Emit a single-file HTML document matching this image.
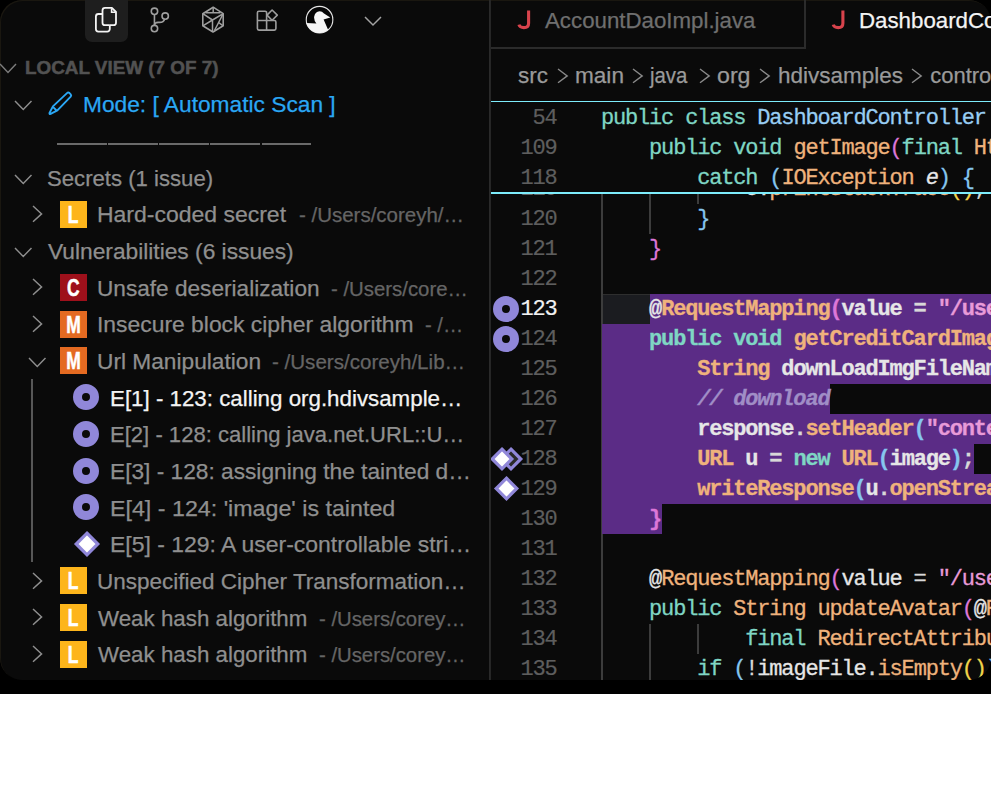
<!DOCTYPE html>
<html><head><meta charset="utf-8">
<style>
*{margin:0;padding:0;box-sizing:border-box}
html,body{width:991px;height:792px;background:#fff;overflow:hidden}
body{position:relative;font-family:"Liberation Sans",sans-serif}
#outer{position:absolute;left:0;top:0;width:991px;height:694px;background:#000}
#panel{position:absolute;left:0;top:0;width:991px;height:680px;background:#0a0a0a;border-radius:22px;overflow:hidden;box-shadow:inset 1px 1px 0 #1a1710}
.abs{position:absolute}
#actsel{position:absolute;left:85px;top:-8px;width:43.3px;height:50px;border-radius:7px;background:#1e1e1e}
.row{position:absolute;width:370px;height:36.667px;line-height:36.667px;font-size:21.67px;color:#9d9d9d;white-space:nowrap;overflow:hidden;text-overflow:ellipsis}
.desc{color:#6f6f6f;font-size:19.5px;margin-left:10px}
.badge{position:absolute;width:27px;height:27px;color:#fff;font-weight:bold;font-size:21px;line-height:27px;text-align:center}
#divider{position:absolute;left:489px;top:0;width:1.5px;height:680px;background:#2a2a2a}
.mono{font-family:"Liberation Mono",monospace;font-size:22px;letter-spacing:-1.18px}
.ln{position:absolute;width:66px;text-align:right;color:#6e6e6e;height:30px;line-height:30px;-webkit-text-stroke-width:0.2px}
.cl{position:absolute;height:30px;line-height:30px;white-space:pre;color:#d8d8d8;-webkit-text-stroke-width:0.3px}
.bsep{display:inline-block;width:30px}
.k{color:#7fd6c4}.f{color:#efb27c}.p{color:#dd77d8}.b{color:#86c6ef}.s{color:#e89ad8}.c{color:#a08ec6;font-style:italic}.w{color:#e6e6e6}.cls{color:#98cdf3}.y{color:#f1d44a}
.t{position:absolute;white-space:pre;transform-origin:0 50%;-webkit-text-stroke:0.25px currentColor}
.i{font-style:italic}
.badge span{display:inline-block;font-size:23px;line-height:27px;transform:scaleX(0.76) translateY(0.7px);font-weight:bold;-webkit-text-stroke:0.5px #fff}

</style></head>
<body>
<div id="outer"></div>
<div id="panel">
<div id="actsel"></div>
<svg class="abs" style="left:88px;top:2px" width="40" height="36" viewBox="0 0 40 36">
<path d="M14.5 11 V8.4 a2.5 2.5 0 0 1 2.5 -2.5 H23.9 L28 10 V20.7 a2.5 2.5 0 0 1 -2.5 2.5 H21.8" fill="none" stroke="#f4f4f4" stroke-width="1.8" stroke-linejoin="round"/>
<path d="M23.6 6.4 V10.3 H27.6" fill="none" stroke="#f4f4f4" stroke-width="1.6"/>
<path d="M14.5 11 V20.7 a2.5 2.5 0 0 0 2.5 2.5 H21.8" fill="none" stroke="#f4f4f4" stroke-width="1.8"/>
<path d="M14.5 12 H10.4 a2.5 2.5 0 0 0 -2.5 2.5 V27.1 a2.5 2.5 0 0 0 2.5 2.5 H19.3 a2.5 2.5 0 0 0 2.5 -2.5 V23.2" fill="none" stroke="#f4f4f4" stroke-width="1.8"/>
</svg>
<svg class="abs" style="left:140px;top:2px" width="40" height="36" viewBox="0 0 40 36">
<circle cx="14.45" cy="9.3" r="3.2" fill="none" stroke="#9e9e9e" stroke-width="1.6"/>
<circle cx="14.45" cy="26.6" r="3.2" fill="none" stroke="#9e9e9e" stroke-width="1.6"/>
<circle cx="25.2" cy="14.1" r="3.2" fill="none" stroke="#9e9e9e" stroke-width="1.6"/>
<path d="M14.45 12.5 V23.4" fill="none" stroke="#9e9e9e" stroke-width="1.6"/>
<path d="M24.6 17.2 Q23.8 20.3 19.5 20.4 H18 Q14.6 20.6 14.45 23" fill="none" stroke="#9e9e9e" stroke-width="1.6"/>
</svg>
<svg class="abs" style="left:195px;top:2px" width="40" height="36" viewBox="0 0 40 36">
<path d="M18.2 5.2 L28.2 11.7 V23.8 L18 30 L7.8 23.8 V11.7 Z" fill="none" stroke="#9e9e9e" stroke-width="1.6" stroke-linejoin="round"/>
<path d="M18.2 5.2 V10.7 M10.5 10.7 H25.5 M7.8 11.7 L17.5 18 L28.2 11.7 M17.5 18 V30 M7.8 23.8 L17.5 18 M28.2 11.7 L19.5 28.5 M24.1 20.9 L28.2 23.8" fill="none" stroke="#9e9e9e" stroke-width="1.5" stroke-linejoin="round"/>
</svg>
<svg class="abs" style="left:250px;top:2px" width="40" height="36" viewBox="0 0 40 36">
<path d="M8.9 9.2 H15.1 a1.5 1.5 0 0 1 1.5 1.5 V18.5 H24.4 a1.5 1.5 0 0 1 1.5 1.5 V26.6 a1.5 1.5 0 0 1 -1.5 1.5 H8.9 a1.5 1.5 0 0 1 -1.5 -1.5 V10.7 a1.5 1.5 0 0 1 1.5 -1.5 Z M7.4 18.5 H16.6 V28.1" fill="none" stroke="#9e9e9e" stroke-width="1.6" stroke-linejoin="round"/>
<path d="M22.1 8 L27.3 13.1 L22.1 18.2 L17 13.1 Z" fill="none" stroke="#9e9e9e" stroke-width="1.6" stroke-linejoin="round"/>
</svg>
<svg class="abs" style="left:300px;top:2px" width="40" height="36" viewBox="0 0 40 36">
<circle cx="19.55" cy="17.65" r="13.3" fill="#050505" stroke="#e6e6e6" stroke-width="1.1"/>
<path d="M6.3 20.9 L16.4 21.4 Q13.6 18 14.2 14.6 Q15.2 9.4 19.6 9.2 Q22.2 9.2 24 11.6 L30.3 15.6 L23.6 17.6 L28.2 27.9 A13.6 13.6 0 0 1 6.3 20.9 Z" fill="#f6f6f6"/>
</svg>
<svg class="abs" style="left:363.0px;top:14.5px" width="20.0" height="12.0"><polyline points="2,2 10.00,10.00 18.00,2" fill="none" stroke="#a3a3a3" stroke-width="1.45"/></svg>
<svg class="abs" style="left:-2.0px;top:62.1px" width="20.0" height="12.4"><polyline points="2,2 10.00,10.40 18.00,2" fill="none" stroke="#7c7c7c" stroke-width="1.45"/></svg>
<div id="hdr" class="t" style="left:24.85px;top:50.10px;height:36.67px;line-height:36.67px;font-size:18.3px;color:#525252;font-weight:bold;transform:scaleX(1.0312);-webkit-text-stroke:0.5px #525252">LOCAL VIEW (7 OF 7)</div>
<svg class="abs" style="left:13.0px;top:99.2px" width="20.5" height="12.4"><polyline points="2,2 10.25,10.40 18.50,2" fill="none" stroke="#8e8e8e" stroke-width="1.45"/></svg>
<svg class="abs" style="left:40px;top:88px" width="40" height="34" viewBox="0 0 40 34">
<path d="M12.9 18.4 L27 5.1 Q28.2 4 29.5 5.1 L30.7 6.3 Q31.7 7.5 30.7 8.7 L17.4 22.3 L10.6 25.9 Q9.2 26.4 9.5 25 Z M13.4 19.3 L16.6 22.5" fill="none" stroke="#2aa7f4" stroke-width="1.9" stroke-linejoin="round"/>
</svg>
<div id="mode" class="t" style="left:82.97px;top:87.30px;height:36.67px;line-height:36.67px;font-size:22.0px;color:#2aa7f4;font-weight:normal;transform:scaleX(1.0331);">Mode: [ Automatic Scan ]</div>
<div class="abs" style="left:56.8px;top:142.6px;width:49.8px;height:2px;background:#6a6a6a"></div>
<div class="abs" style="left:108.0px;top:142.6px;width:49.8px;height:2px;background:#6a6a6a"></div>
<div class="abs" style="left:159.2px;top:142.6px;width:49.8px;height:2px;background:#6a6a6a"></div>
<div class="abs" style="left:210.4px;top:142.6px;width:49.8px;height:2px;background:#6a6a6a"></div>
<div class="abs" style="left:261.6px;top:142.6px;width:49.8px;height:2px;background:#6a6a6a"></div>
<svg class="abs" style="left:13.0px;top:172.6px" width="20.5" height="12.4"><polyline points="2,2 10.25,10.40 18.50,2" fill="none" stroke="#8e8e8e" stroke-width="1.45"/></svg>
<div id="sec" class="t" style="left:46.70px;top:160.63px;height:36.67px;line-height:36.67px;font-size:22.0px;color:#8f8f8f;font-weight:normal;transform:scaleX(1.0062);">Secrets (1 issue)</div>
<svg class="abs" style="left:31.0px;top:203.9px" width="12.6" height="19.8"><polyline points="2,2 10.60,9.90 2,17.80" fill="none" stroke="#8e8e8e" stroke-width="1.45"/></svg>
<div class="badge" style="left:59.8px;top:200.80px;background:#fdb51b"><span>L</span></div>
<div id="hc" class="t" style="left:96.64px;top:197.30px;height:36.67px;line-height:36.67px;font-size:22.0px;color:#8f8f8f;font-weight:normal;transform:scaleX(1.0445);">Hard-coded secret</div>
<div id="hcd" class="t" style="left:299.00px;top:197.30px;height:36.67px;line-height:36.67px;font-size:19.6px;color:#656565;font-weight:normal;transform:scaleX(1.0449);">- /Users/coreyh/…</div>
<svg class="abs" style="left:13.0px;top:245.9px" width="20.5" height="12.4"><polyline points="2,2 10.25,10.40 18.50,2" fill="none" stroke="#8e8e8e" stroke-width="1.45"/></svg>
<div id="vul" class="t" style="left:47.72px;top:233.97px;height:36.67px;line-height:36.67px;font-size:22.0px;color:#8f8f8f;font-weight:normal;transform:scaleX(1.0337);">Vulnerabilities (6 issues)</div>
<svg class="abs" style="left:31.0px;top:277.3px" width="12.6" height="19.8"><polyline points="2,2 10.60,9.90 2,17.80" fill="none" stroke="#8e8e8e" stroke-width="1.45"/></svg>
<div class="badge" style="left:59.8px;top:274.14px;background:#9e101b"><span>C</span></div>
<div id="us" class="t" style="left:96.66px;top:270.64px;height:36.67px;line-height:36.67px;font-size:22.0px;color:#8f8f8f;font-weight:normal;transform:scaleX(1.0281);">Unsafe deserialization</div>
<div id="usd" class="t" style="left:330.79px;top:270.64px;height:36.67px;line-height:36.67px;font-size:19.6px;color:#656565;font-weight:normal;transform:scaleX(1.0388);">- /Users/core…</div>
<svg class="abs" style="left:31.0px;top:313.9px" width="12.6" height="19.8"><polyline points="2,2 10.60,9.90 2,17.80" fill="none" stroke="#8e8e8e" stroke-width="1.45"/></svg>
<div class="badge" style="left:59.8px;top:310.80px;background:#e46a21"><span>M</span></div>
<div id="ib" class="t" style="left:96.64px;top:307.30px;height:36.67px;line-height:36.67px;font-size:22.0px;color:#8f8f8f;font-weight:normal;transform:scaleX(1.0398);">Insecure block cipher algorithm</div>
<div id="ibd" class="t" style="left:425.49px;top:307.30px;height:36.67px;line-height:36.67px;font-size:19.6px;color:#656565;font-weight:normal;transform:scaleX(1.0311);">- /…</div>
<svg class="abs" style="left:26.8px;top:355.9px" width="20.5" height="12.4"><polyline points="2,2 10.25,10.40 18.50,2" fill="none" stroke="#8e8e8e" stroke-width="1.45"/></svg>
<div class="badge" style="left:59.8px;top:347.47px;background:#e46a21"><span>M</span></div>
<div id="um" class="t" style="left:96.66px;top:343.97px;height:36.67px;line-height:36.67px;font-size:22.0px;color:#8f8f8f;font-weight:normal;transform:scaleX(1.0319);">Url Manipulation</div>
<div id="umd" class="t" style="left:272.10px;top:343.97px;height:36.67px;line-height:36.67px;font-size:19.6px;color:#656565;font-weight:normal;transform:scaleX(1.0495);">- /Users/coreyh/Lib…</div>
<div class="abs" style="left:31.4px;top:379px;width:1.4px;height:182.5px;background:#575757"></div>
<svg class="abs" style="left:72.4px;top:383.2px" width="28" height="28"><circle cx="14" cy="14" r="8.5" fill="none" stroke="#9087d9" stroke-width="9"/></svg>
<div id="e1" class="t" style="left:109.68px;top:380.64px;height:36.67px;line-height:36.67px;font-size:22.0px;color:#f4f4f4;font-weight:normal;transform:scaleX(1.0145);">E[1] - 123: calling org.hdivsample…</div>
<svg class="abs" style="left:72.4px;top:419.8px" width="28" height="28"><circle cx="14" cy="14" r="8.5" fill="none" stroke="#9087d9" stroke-width="9"/></svg>
<div id="e2" class="t" style="left:109.69px;top:417.30px;height:36.67px;line-height:36.67px;font-size:22.0px;color:#8f8f8f;font-weight:normal;transform:scaleX(1.0029);">E[2] - 128: calling java.net.URL::U…</div>
<svg class="abs" style="left:72.4px;top:456.5px" width="28" height="28"><circle cx="14" cy="14" r="8.5" fill="none" stroke="#9087d9" stroke-width="9"/></svg>
<div id="e3" class="t" style="left:109.66px;top:453.97px;height:36.67px;line-height:36.67px;font-size:22.0px;color:#8f8f8f;font-weight:normal;transform:scaleX(1.0318);">E[3] - 128: assigning the tainted d…</div>
<svg class="abs" style="left:72.4px;top:493.2px" width="28" height="28"><circle cx="14" cy="14" r="8.5" fill="none" stroke="#9087d9" stroke-width="9"/></svg>
<div id="e4" class="t" style="left:109.63px;top:490.64px;height:36.67px;line-height:36.67px;font-size:22.0px;color:#8f8f8f;font-weight:normal;transform:scaleX(1.0560);">E[4] - 124: 'image' is tainted</div>
<svg class="abs" style="left:72.5px;top:529.8px" width="28" height="28"><path d="M14.0 3.2 L24.8 14.0 L14.0 24.8 L3.2 14.0 Z" fill="#fff" stroke="#9087d9" stroke-width="3.2" stroke-linejoin="miter"/></svg>
<div id="e5" class="t" style="left:109.64px;top:527.30px;height:36.67px;line-height:36.67px;font-size:22.0px;color:#8f8f8f;font-weight:normal;transform:scaleX(1.0439);">E[5] - 129: A user-controllable stri…</div>
<svg class="abs" style="left:31.0px;top:570.6px" width="12.6" height="19.8"><polyline points="2,2 10.60,9.90 2,17.80" fill="none" stroke="#8e8e8e" stroke-width="1.45"/></svg>
<div class="badge" style="left:59.8px;top:567.47px;background:#fdb51b"><span>L</span></div>
<div id="uc" class="t" style="left:96.67px;top:563.97px;height:36.67px;line-height:36.67px;font-size:22.0px;color:#8f8f8f;font-weight:normal;transform:scaleX(1.0224);">Unspecified Cipher Transformation…</div>
<svg class="abs" style="left:31.0px;top:607.3px" width="12.6" height="19.8"><polyline points="2,2 10.60,9.90 2,17.80" fill="none" stroke="#8e8e8e" stroke-width="1.45"/></svg>
<div class="badge" style="left:59.8px;top:604.14px;background:#fdb51b"><span>L</span></div>
<div id="wh1" class="t" style="left:97.61px;top:600.64px;height:36.67px;line-height:36.67px;font-size:22.0px;color:#8f8f8f;font-weight:normal;transform:scaleX(1.0151);">Weak hash algorithm</div>
<div id="wh1d" class="t" style="left:319.27px;top:600.64px;height:36.67px;line-height:36.67px;font-size:19.6px;color:#656565;font-weight:normal;transform:scaleX(1.0360);">- /Users/corey…</div>
<svg class="abs" style="left:31.0px;top:643.9px" width="12.6" height="19.8"><polyline points="2,2 10.60,9.90 2,17.80" fill="none" stroke="#8e8e8e" stroke-width="1.45"/></svg>
<div class="badge" style="left:59.8px;top:640.80px;background:#fdb51b"><span>L</span></div>
<div id="wh2" class="t" style="left:97.61px;top:637.30px;height:36.67px;line-height:36.67px;font-size:22.0px;color:#8f8f8f;font-weight:normal;transform:scaleX(1.0151);">Weak hash algorithm</div>
<div id="wh2d" class="t" style="left:319.27px;top:637.30px;height:36.67px;line-height:36.67px;font-size:19.6px;color:#656565;font-weight:normal;transform:scaleX(1.0360);">- /Users/corey…</div>
<div id="divider"></div>
<div class="abs" style="left:491px;top:47px;width:314px;height:1.5px;background:#2b2b2b"></div>
<div class="abs" style="left:804px;top:0;width:1.5px;height:48.5px;background:#2b2b2b"></div>
<svg class="abs" style="left:510px;top:8px" width="30" height="26"><path d="M18.6 2.4 V15.2 Q18.6 19.6 13.9 19.6 Q9.8 19.6 8.9 16.6" fill="none" stroke="#d8434c" stroke-width="3.1"/></svg>
<div id="tab1" class="t" style="left:544.50px;top:0.00px;height:42.00px;line-height:42.00px;font-size:22.0px;color:#6f6f6f;font-weight:normal;transform:scaleX(1.0125);">AccountDaoImpl.java</div>
<svg class="abs" style="left:824px;top:8px" width="30" height="26"><path d="M18.9 2.4 V15.2 Q18.9 19.6 14.2 19.6 Q10.1 19.6 9.2 16.6" fill="none" stroke="#d8434c" stroke-width="3.1"/></svg>
<div id="bc1" class="t" style="left:517.79px;top:58.00px;height:36.00px;line-height:36.00px;font-size:22.0px;color:#9a9a9a;font-weight:normal;transform:scaleX(1.0215);">src</div>
<div id="bc2" class="t" style="left:574.78px;top:58.00px;height:36.00px;line-height:36.00px;font-size:22.0px;color:#9a9a9a;font-weight:normal;transform:scaleX(1.0263);">main</div>
<div id="bc3" class="t" style="left:650.25px;top:58.00px;height:36.00px;line-height:36.00px;font-size:22.0px;color:#9a9a9a;font-weight:normal;transform:scaleX(0.9258);">java</div>
<div id="bc4" class="t" style="left:717.00px;top:58.00px;height:36.00px;line-height:36.00px;font-size:22.0px;color:#9a9a9a;font-weight:normal;transform:scaleX(1.0523);">org</div>
<div id="bc5" class="t" style="left:777.69px;top:58.00px;height:36.00px;line-height:36.00px;font-size:22.0px;color:#9a9a9a;font-weight:normal;transform:scaleX(1.0215);">hdivsamples</div>
<div id="bc6" class="t" style="left:930.20px;top:58.00px;height:36.00px;line-height:36.00px;font-size:22.0px;color:#9a9a9a;font-weight:normal;transform:scaleX(1.0000);">controllers</div>
<svg class="abs" style="left:556.2px;top:67.3px" width="13.2" height="17.8"><polyline points="2,2 11.20,8.90 2,15.80" fill="none" stroke="#8a8a8a" stroke-width="1.4"/></svg>
<svg class="abs" style="left:630.9px;top:67.3px" width="13.2" height="17.8"><polyline points="2,2 11.20,8.90 2,15.80" fill="none" stroke="#8a8a8a" stroke-width="1.4"/></svg>
<svg class="abs" style="left:697.5px;top:67.3px" width="13.2" height="17.8"><polyline points="2,2 11.20,8.90 2,15.80" fill="none" stroke="#8a8a8a" stroke-width="1.4"/></svg>
<svg class="abs" style="left:757.7px;top:67.3px" width="13.2" height="17.8"><polyline points="2,2 11.20,8.90 2,15.80" fill="none" stroke="#8a8a8a" stroke-width="1.4"/></svg>
<svg class="abs" style="left:910.4px;top:67.3px" width="13.2" height="17.8"><polyline points="2,2 11.20,8.90 2,15.80" fill="none" stroke="#8a8a8a" stroke-width="1.4"/></svg>
<div class="abs" style="left:491px;top:100.7px;width:600px;height:1.6px;background:#7decfb"></div>
<div class="abs" style="left:601.00px;top:192.00px;width:1.5px;height:488.00px;background:#3c3c3c"></div>
<div class="abs" style="left:649.08px;top:192.00px;width:1.5px;height:41.70px;background:#3c3c3c"></div>
<div class="abs" style="left:697.16px;top:192.00px;width:1.5px;height:11.70px;background:#3c3c3c"></div>
<div class="abs" style="left:649.08px;top:623.70px;width:1.5px;height:56.30px;background:#3c3c3c"></div>
<div class="abs" style="left:697.16px;top:623.70px;width:1.5px;height:30.00px;background:#3c3c3c"></div>
<div class="abs" style="left:602.50px;top:293.70px;width:47.08px;height:30px;background:#1b1c20;border-top:1px solid #2e2e2e"></div>
<div class="abs" style="left:649.58px;top:293.70px;width:450.42px;height:30px;background:#5b2c86"></div>
<div class="abs" style="left:601.50px;top:323.70px;width:498.50px;height:30px;background:#5b2c86"></div>
<div class="abs" style="left:601.50px;top:353.70px;width:498.50px;height:30px;background:#5b2c86"></div>
<div class="abs" style="left:601.50px;top:413.70px;width:498.50px;height:30px;background:#5b2c86"></div>
<div class="abs" style="left:601.50px;top:473.70px;width:498.50px;height:30px;background:#5b2c86"></div>
<div class="abs" style="left:601.50px;top:383.70px;width:228.38px;height:30px;background:#5b2c86"></div>
<div class="abs" style="left:601.50px;top:443.70px;width:372.62px;height:30px;background:#5b2c86"></div>
<div class="abs" style="left:601.50px;top:503.70px;width:60.10px;height:30px;background:#5b2c86"></div>
<div class="ln mono" style="left:480px;top:175.30px;width:76.6px;color:#5e5e5e">119</div>
<div class="cl mono" style="left:601.00px;top:174.70px">            <span class="w">e</span>.<span class="f">printStackTrace</span><span class="y">()</span>;</div>
<div class="ln mono" style="left:480px;top:205.30px;width:76.6px;color:#5e5e5e">120</div>
<div class="cl mono" style="left:601.00px;top:204.70px">        <span class="b">}</span></div>
<div class="ln mono" style="left:480px;top:235.30px;width:76.6px;color:#5e5e5e">121</div>
<div class="cl mono" style="left:601.00px;top:234.70px">    <span class="p">}</span></div>
<div class="ln mono" style="left:480px;top:265.30px;width:76.6px;color:#5e5e5e">122</div>
<div class="cl mono" style="left:601.00px;top:264.70px"></div>
<div class="ln mono" style="left:480px;top:295.30px;width:76.6px;color:#f2f2f2">123</div>
<div class="cl mono" style="left:601.00px;top:294.70px;font-weight:bold">    <span class="w">@</span><span class="f">RequestMapping</span><span class="p">(</span><span class="w">value</span> = <span class="s">"/user/creditcardimage"</span></div>
<div class="ln mono" style="left:480px;top:325.30px;width:76.6px;color:#5e5e5e">124</div>
<div class="cl mono" style="left:601.00px;top:324.70px;font-weight:bold">    <span class="k">public</span> <span class="k">void</span> <span class="f">getCreditCardImage</span><span class="p">(</span></div>
<div class="ln mono" style="left:480px;top:355.30px;width:76.6px;color:#5e5e5e">125</div>
<div class="cl mono" style="left:601.00px;top:354.70px;font-weight:bold">        <span class="f">String</span> <span class="w">downLoadImgFileName</span> = </div>
<div class="ln mono" style="left:480px;top:385.30px;width:76.6px;color:#5e5e5e">126</div>
<div class="cl mono" style="left:601.00px;top:384.70px;font-weight:bold">        <span class="c">// download</span></div>
<div class="ln mono" style="left:480px;top:415.30px;width:76.6px;color:#5e5e5e">127</div>
<div class="cl mono" style="left:601.00px;top:414.70px;font-weight:bold">        <span class="w">response</span>.<span class="f">setHeader</span><span class="b">(</span><span class="s">"content-disposition"</span></div>
<div class="ln mono" style="left:480px;top:445.30px;width:76.6px;color:#5e5e5e">128</div>
<div class="cl mono" style="left:601.00px;top:444.70px;font-weight:bold">        <span class="f">URL</span> <span class="w">u</span> = <span class="k">new</span> <span class="f">URL</span><span class="b">(</span><span class="w">image</span><span class="b">)</span>;</div>
<div class="ln mono" style="left:480px;top:475.30px;width:76.6px;color:#5e5e5e">129</div>
<div class="cl mono" style="left:601.00px;top:474.70px;font-weight:bold">        <span class="f">writeResponse</span><span class="b">(</span><span class="w">u</span>.<span class="f">openStream</span><span class="y">()</span></div>
<div class="ln mono" style="left:480px;top:505.30px;width:76.6px;color:#5e5e5e">130</div>
<div class="cl mono" style="left:601.00px;top:504.70px;font-weight:bold">    <span class="p">}</span></div>
<div class="ln mono" style="left:480px;top:535.30px;width:76.6px;color:#5e5e5e">131</div>
<div class="cl mono" style="left:601.00px;top:534.70px"></div>
<div class="ln mono" style="left:480px;top:565.30px;width:76.6px;color:#5e5e5e">132</div>
<div class="cl mono" style="left:601.00px;top:564.70px">    <span class="w">@</span><span class="f">RequestMapping</span><span class="p">(</span><span class="w">value</span> = <span class="s">"/user/avatar"</span></div>
<div class="ln mono" style="left:480px;top:595.30px;width:76.6px;color:#5e5e5e">133</div>
<div class="cl mono" style="left:601.00px;top:594.70px">    <span class="k">public</span> <span class="f">String</span> <span class="f">updateAvatar</span><span class="p">(</span><span class="w">@</span><span class="f">RequestParam</span></div>
<div class="ln mono" style="left:480px;top:625.30px;width:76.6px;color:#5e5e5e">134</div>
<div class="cl mono" style="left:601.00px;top:624.70px">            <span class="k">final</span> <span class="f">RedirectAttributes</span></div>
<div class="ln mono" style="left:480px;top:655.30px;width:76.6px;color:#5e5e5e">135</div>
<div class="cl mono" style="left:601.00px;top:654.70px">        <span class="k">if</span> <span class="b">(</span>!<span class="w">imageFile</span>.<span class="f">isEmpty</span><span class="y">()</span><span class="b">)</span> {</div>
<div class="abs" style="left:491px;top:102.5px;width:600px;height:90px;background:#0a0a0a"></div>
<div class="ln mono" style="left:480px;top:104.10px;width:76.6px;color:#5e5e5e">54</div>
<div class="cl mono" style="left:601.00px;top:103.50px"><span class="k">public</span> <span class="k">class</span> <span class="cls">DashboardController</span> {</div>
<div class="ln mono" style="left:480px;top:134.10px;width:76.6px;color:#5e5e5e">109</div>
<div class="cl mono" style="left:601.00px;top:133.50px">    <span class="k">public</span> <span class="k">void</span> <span class="f">getImage</span><span class="p">(</span><span class="k">final</span> <span class="f">HttpServletRequest</span></div>
<div class="ln mono" style="left:480px;top:164.10px;width:76.6px;color:#5e5e5e">118</div>
<div class="cl mono" style="left:601.00px;top:163.50px">        <span class="k">catch</span> <span class="b">(</span><span class="f">IOException</span> <span class="w i">e</span><span class="b">)</span> <span class="b">{</span></div>
<div class="abs" style="left:491px;top:192px;width:600px;height:2px;background:#7decfb"></div>
<svg class="abs" style="left:492px;top:294.7px" width="28" height="28"><circle cx="14" cy="14" r="8.5" fill="none" stroke="#9087d9" stroke-width="9"/></svg>
<svg class="abs" style="left:492px;top:324.7px" width="28" height="28"><circle cx="14" cy="14" r="8.5" fill="none" stroke="#9087d9" stroke-width="9"/></svg>
<svg class="abs" style="left:497.5px;top:445.7px" width="26" height="26"><path d="M13.0 3.2 L22.8 13.0 L13.0 22.8 L3.2 13.0 Z" fill="#2a2a2a" stroke="#9087d9" stroke-width="3.2"/></svg>
<svg class="abs" style="left:489.0px;top:445.7px" width="26" height="26"><path d="M13.0 3.2 L22.8 13.0 L13.0 22.8 L3.2 13.0 Z" fill="#fff" stroke="#9087d9" stroke-width="3.2"/></svg>
<svg class="abs" style="left:492.5px;top:475.2px" width="27" height="27"><path d="M13.5 3.2 L23.8 13.5 L13.5 23.8 L3.2 13.5 Z" fill="#fff" stroke="#9087d9" stroke-width="3.2"/></svg>
<div class="abs" style="left:489.5px;top:0;width:1.5px;height:680px;background:#262626"></div>
</div>
<div id="tab2" class="t" style="left:858.50px;top:0.00px;height:42.00px;line-height:42.00px;font-size:22.0px;color:#f4f4f4;font-weight:normal;transform:scaleX(1.0125);">DashboardController.java</div>
</body></html>
